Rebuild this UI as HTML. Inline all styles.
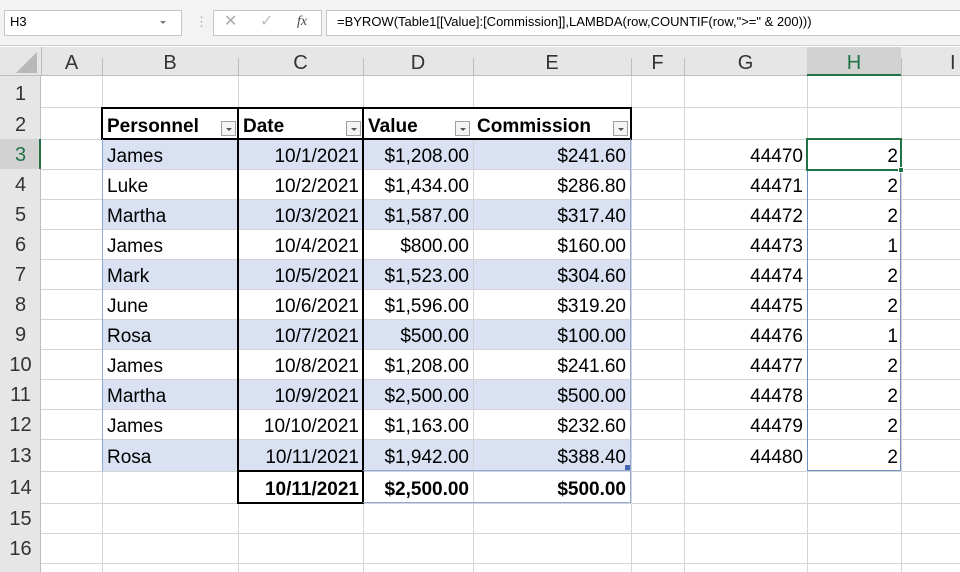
<!DOCTYPE html><html><head><style>
*{margin:0;padding:0;box-sizing:border-box}
body{width:960px;height:572px;overflow:hidden;background:#fff;font-family:"Liberation Sans",Calibri,sans-serif;position:relative}
.a{position:absolute}
.t{position:absolute;font-size:19px;line-height:33px;white-space:nowrap;color:#000}
.r{text-align:right}
.c{text-align:center}
.hl{position:absolute;height:1px;background:#d4d4d4}
.vl{position:absolute;width:1px;background:#d4d4d4}
.dd{position:absolute;width:15px;height:15px;border:1px solid #a0a0a0;background:#f4f4f4}
.dd:after{content:"";position:absolute;left:4px;top:6px;border-left:3px solid transparent;border-right:3px solid transparent;border-top:3px solid #555}
</style></head><body>
<div class="a" style="left:0;top:0;width:960px;height:46px;background:#f3f3f3;border-bottom:1px solid #d0d0d0"></div>
<div class="a" style="left:4px;top:10px;width:178px;height:26px;background:#fff;border:1px solid #c6c6c6"></div>
<div class="t" style="left:10px;top:8px;font-size:13px;line-height:28px">H3</div>
<div class="a" style="left:160px;top:21px;border-left:3px solid transparent;border-right:3px solid transparent;border-top:3px solid #777"></div>
<div class="t" style="left:195px;top:8px;font-size:13px;line-height:28px;color:#aaa">⋮</div>
<div class="a" style="left:213px;top:10px;width:109px;height:26px;background:#fff;border:1px solid #c6c6c6"></div>
<div class="t" style="left:224px;top:8px;font-size:16px;line-height:28px;color:#aaa">✕</div>
<div class="t" style="left:260px;top:8px;font-size:16px;line-height:28px;color:#bbb">✓</div>
<div class="t" style="left:297px;top:8px;font-size:14px;line-height:28px;color:#444;font-family:'Liberation Serif',serif;font-style:italic">fx</div>
<div class="a" style="left:326px;top:10px;width:634px;height:26px;background:#fff;border:1px solid #c6c6c6;border-right:none"></div>
<div class="t" style="left:337px;top:8px;font-size:13px;line-height:28px">=BYROW(Table1[[Value]:[Commission]],LAMBDA(row,COUNTIF(row,"&gt;=" &amp; 200)))</div>
<div class="a" style="left:0;top:47px;width:960px;height:29px;background:#e6e6e6;border-bottom:1px solid #bdbdbd"></div>
<div class="a" style="left:0;top:76px;width:41px;height:496px;background:#e6e6e6;border-right:1px solid #bdbdbd"></div>
<div class="a" style="left:16px;top:52px;width:0;height:0;border-left:21px solid transparent;border-bottom:21px solid #b8b8b8"></div>
<div class="a" style="left:807px;top:47px;width:94px;height:29px;background:#d2d2d2;border-bottom:2px solid #217346"></div>
<div class="t c" style="left:41px;top:47px;width:61px;font-size:20px;color:#333">A</div>
<div class="t c" style="left:102px;top:47px;width:136px;font-size:20px;color:#333">B</div>
<div class="t c" style="left:238px;top:47px;width:125px;font-size:20px;color:#333">C</div>
<div class="t c" style="left:363px;top:47px;width:110px;font-size:20px;color:#333">D</div>
<div class="t c" style="left:473px;top:47px;width:158px;font-size:20px;color:#333">E</div>
<div class="t c" style="left:631px;top:47px;width:53px;font-size:20px;color:#333">F</div>
<div class="t c" style="left:684px;top:47px;width:123px;font-size:20px;color:#333">G</div>
<div class="t c" style="left:807px;top:47px;width:94px;font-size:20px;color:#217346">H</div>
<div class="t" style="left:950px;top:47px;font-size:20px;color:#333">I</div>
<div class="vl" style="left:41px;top:47px;height:29px;background:#bdbdbd"></div>
<div class="vl" style="left:102px;top:58px;height:18px;background:#bdbdbd"></div>
<div class="vl" style="left:238px;top:58px;height:18px;background:#bdbdbd"></div>
<div class="vl" style="left:363px;top:58px;height:18px;background:#bdbdbd"></div>
<div class="vl" style="left:473px;top:58px;height:18px;background:#bdbdbd"></div>
<div class="vl" style="left:631px;top:58px;height:18px;background:#bdbdbd"></div>
<div class="vl" style="left:684px;top:58px;height:18px;background:#bdbdbd"></div>
<div class="vl" style="left:901px;top:58px;height:18px;background:#bdbdbd"></div>
<div class="a" style="left:102px;top:139px;width:529px;height:30px;background:#d9e1f2"></div>
<div class="a" style="left:102px;top:199px;width:529px;height:30px;background:#d9e1f2"></div>
<div class="a" style="left:102px;top:259px;width:529px;height:30px;background:#d9e1f2"></div>
<div class="a" style="left:102px;top:319px;width:529px;height:30px;background:#d9e1f2"></div>
<div class="a" style="left:102px;top:379px;width:529px;height:30px;background:#d9e1f2"></div>
<div class="a" style="left:102px;top:439px;width:529px;height:32px;background:#d9e1f2"></div>
<div class="hl" style="left:41px;top:107px;width:919px"></div>
<div class="hl" style="left:41px;top:139px;width:919px"></div>
<div class="hl" style="left:41px;top:169px;width:919px"></div>
<div class="hl" style="left:41px;top:199px;width:919px"></div>
<div class="hl" style="left:41px;top:229px;width:919px"></div>
<div class="hl" style="left:41px;top:259px;width:919px"></div>
<div class="hl" style="left:41px;top:289px;width:919px"></div>
<div class="hl" style="left:41px;top:319px;width:919px"></div>
<div class="hl" style="left:41px;top:349px;width:919px"></div>
<div class="hl" style="left:41px;top:379px;width:919px"></div>
<div class="hl" style="left:41px;top:409px;width:919px"></div>
<div class="hl" style="left:41px;top:439px;width:919px"></div>
<div class="hl" style="left:41px;top:471px;width:919px"></div>
<div class="hl" style="left:41px;top:503px;width:919px"></div>
<div class="hl" style="left:41px;top:533px;width:919px"></div>
<div class="hl" style="left:41px;top:563px;width:919px"></div>
<div class="vl" style="left:102px;top:76px;height:496px"></div>
<div class="vl" style="left:238px;top:76px;height:496px"></div>
<div class="vl" style="left:363px;top:76px;height:496px"></div>
<div class="vl" style="left:473px;top:76px;height:496px"></div>
<div class="vl" style="left:631px;top:76px;height:496px"></div>
<div class="vl" style="left:684px;top:76px;height:496px"></div>
<div class="vl" style="left:807px;top:76px;height:496px"></div>
<div class="vl" style="left:901px;top:76px;height:496px"></div>
<div class="a" style="left:101px;top:107px;width:531px;height:33px;border:2px solid #000;background:#fff"></div>
<div class="a" style="left:237px;top:107px;width:2px;height:397px;background:#000"></div>
<div class="a" style="left:362px;top:107px;width:2px;height:397px;background:#000"></div>
<div class="a" style="left:238px;top:470px;width:125px;height:2px;background:#000"></div>
<div class="a" style="left:363px;top:470px;width:268px;height:1px;background:#8ea9db"></div>
<div class="a" style="left:102px;top:139px;width:1px;height:332px;background:#8ea9db"></div>
<div class="a" style="left:630px;top:139px;width:1px;height:364px;background:#8ea9db"></div>
<div class="a" style="left:363px;top:502px;width:268px;height:1px;background:#8ea9db"></div>
<div class="a" style="left:238px;top:502px;width:125px;height:2px;background:#000"></div>
<div class="a" style="left:625px;top:465px;width:5px;height:5px;background:#4466aa"></div>
<div class="t" style="left:107px;top:110px;font-weight:bold">Personnel</div>
<div class="t" style="left:243px;top:110px;font-weight:bold">Date</div>
<div class="t" style="left:368px;top:110px;font-weight:bold">Value</div>
<div class="t" style="left:477px;top:110px;font-weight:bold">Commission</div>
<div class="dd" style="left:221px;top:121px"></div>
<div class="dd" style="left:346px;top:121px"></div>
<div class="dd" style="left:455px;top:121px"></div>
<div class="dd" style="left:613px;top:121px"></div>
<div class="t c" style="left:0;top:78px;width:41px;font-size:20px;color:#333">1</div>
<div class="t c" style="left:0;top:109px;width:41px;font-size:20px;color:#333">2</div>
<div class="a" style="left:0;top:139px;width:41px;height:30px;background:#d2d2d2;border-right:2px solid #217346"></div>
<div class="t c" style="left:0;top:139px;width:41px;font-size:20px;color:#217346">3</div>
<div class="t c" style="left:0;top:169px;width:41px;font-size:20px;color:#333">4</div>
<div class="t c" style="left:0;top:199px;width:41px;font-size:20px;color:#333">5</div>
<div class="t c" style="left:0;top:229px;width:41px;font-size:20px;color:#333">6</div>
<div class="t c" style="left:0;top:259px;width:41px;font-size:20px;color:#333">7</div>
<div class="t c" style="left:0;top:289px;width:41px;font-size:20px;color:#333">8</div>
<div class="t c" style="left:0;top:319px;width:41px;font-size:20px;color:#333">9</div>
<div class="t c" style="left:0;top:349px;width:41px;font-size:20px;color:#333">10</div>
<div class="t c" style="left:0;top:379px;width:41px;font-size:20px;color:#333">11</div>
<div class="t c" style="left:0;top:409px;width:41px;font-size:20px;color:#333">12</div>
<div class="t c" style="left:0;top:440px;width:41px;font-size:20px;color:#333">13</div>
<div class="t c" style="left:0;top:472px;width:41px;font-size:20px;color:#333">14</div>
<div class="t c" style="left:0;top:503px;width:41px;font-size:20px;color:#333">15</div>
<div class="t c" style="left:0;top:533px;width:41px;font-size:20px;color:#333">16</div>
<div class="t" style="left:107px;top:140px">James</div><div class="t r" style="left:238px;top:140px;width:121px">10/1/2021</div><div class="t r" style="left:363px;top:140px;width:106px">$1,208.00</div><div class="t r" style="left:473px;top:140px;width:153px">$241.60</div><div class="t r" style="left:684px;top:140px;width:119px">44470</div><div class="t r" style="left:807px;top:140px;width:91px">2</div>
<div class="t" style="left:107px;top:170px">Luke</div><div class="t r" style="left:238px;top:170px;width:121px">10/2/2021</div><div class="t r" style="left:363px;top:170px;width:106px">$1,434.00</div><div class="t r" style="left:473px;top:170px;width:153px">$286.80</div><div class="t r" style="left:684px;top:170px;width:119px">44471</div><div class="t r" style="left:807px;top:170px;width:91px">2</div>
<div class="t" style="left:107px;top:200px">Martha</div><div class="t r" style="left:238px;top:200px;width:121px">10/3/2021</div><div class="t r" style="left:363px;top:200px;width:106px">$1,587.00</div><div class="t r" style="left:473px;top:200px;width:153px">$317.40</div><div class="t r" style="left:684px;top:200px;width:119px">44472</div><div class="t r" style="left:807px;top:200px;width:91px">2</div>
<div class="t" style="left:107px;top:230px">James</div><div class="t r" style="left:238px;top:230px;width:121px">10/4/2021</div><div class="t r" style="left:363px;top:230px;width:106px">$800.00</div><div class="t r" style="left:473px;top:230px;width:153px">$160.00</div><div class="t r" style="left:684px;top:230px;width:119px">44473</div><div class="t r" style="left:807px;top:230px;width:91px">1</div>
<div class="t" style="left:107px;top:260px">Mark</div><div class="t r" style="left:238px;top:260px;width:121px">10/5/2021</div><div class="t r" style="left:363px;top:260px;width:106px">$1,523.00</div><div class="t r" style="left:473px;top:260px;width:153px">$304.60</div><div class="t r" style="left:684px;top:260px;width:119px">44474</div><div class="t r" style="left:807px;top:260px;width:91px">2</div>
<div class="t" style="left:107px;top:290px">June</div><div class="t r" style="left:238px;top:290px;width:121px">10/6/2021</div><div class="t r" style="left:363px;top:290px;width:106px">$1,596.00</div><div class="t r" style="left:473px;top:290px;width:153px">$319.20</div><div class="t r" style="left:684px;top:290px;width:119px">44475</div><div class="t r" style="left:807px;top:290px;width:91px">2</div>
<div class="t" style="left:107px;top:320px">Rosa</div><div class="t r" style="left:238px;top:320px;width:121px">10/7/2021</div><div class="t r" style="left:363px;top:320px;width:106px">$500.00</div><div class="t r" style="left:473px;top:320px;width:153px">$100.00</div><div class="t r" style="left:684px;top:320px;width:119px">44476</div><div class="t r" style="left:807px;top:320px;width:91px">1</div>
<div class="t" style="left:107px;top:350px">James</div><div class="t r" style="left:238px;top:350px;width:121px">10/8/2021</div><div class="t r" style="left:363px;top:350px;width:106px">$1,208.00</div><div class="t r" style="left:473px;top:350px;width:153px">$241.60</div><div class="t r" style="left:684px;top:350px;width:119px">44477</div><div class="t r" style="left:807px;top:350px;width:91px">2</div>
<div class="t" style="left:107px;top:380px">Martha</div><div class="t r" style="left:238px;top:380px;width:121px">10/9/2021</div><div class="t r" style="left:363px;top:380px;width:106px">$2,500.00</div><div class="t r" style="left:473px;top:380px;width:153px">$500.00</div><div class="t r" style="left:684px;top:380px;width:119px">44478</div><div class="t r" style="left:807px;top:380px;width:91px">2</div>
<div class="t" style="left:107px;top:410px">James</div><div class="t r" style="left:238px;top:410px;width:121px">10/10/2021</div><div class="t r" style="left:363px;top:410px;width:106px">$1,163.00</div><div class="t r" style="left:473px;top:410px;width:153px">$232.60</div><div class="t r" style="left:684px;top:410px;width:119px">44479</div><div class="t r" style="left:807px;top:410px;width:91px">2</div>
<div class="t" style="left:107px;top:441px">Rosa</div><div class="t r" style="left:238px;top:441px;width:121px">10/11/2021</div><div class="t r" style="left:363px;top:441px;width:106px">$1,942.00</div><div class="t r" style="left:473px;top:441px;width:153px">$388.40</div><div class="t r" style="left:684px;top:441px;width:119px">44480</div><div class="t r" style="left:807px;top:441px;width:91px">2</div>
<div class="t r" style="left:238px;top:473px;width:121px;font-weight:bold">10/11/2021</div><div class="t r" style="left:363px;top:473px;width:106px;font-weight:bold">$2,500.00</div><div class="t r" style="left:473px;top:473px;width:153px;font-weight:bold">$500.00</div>
<div class="a" style="left:807px;top:139px;width:94px;height:332px;border:1px solid #6f8fc7"></div>
<div class="a" style="left:806px;top:138px;width:96px;height:33px;border:2px solid #217346"></div>
<div class="a" style="left:898px;top:167px;width:6px;height:6px;background:#217346;border:1px solid #fff"></div>
</body></html>
